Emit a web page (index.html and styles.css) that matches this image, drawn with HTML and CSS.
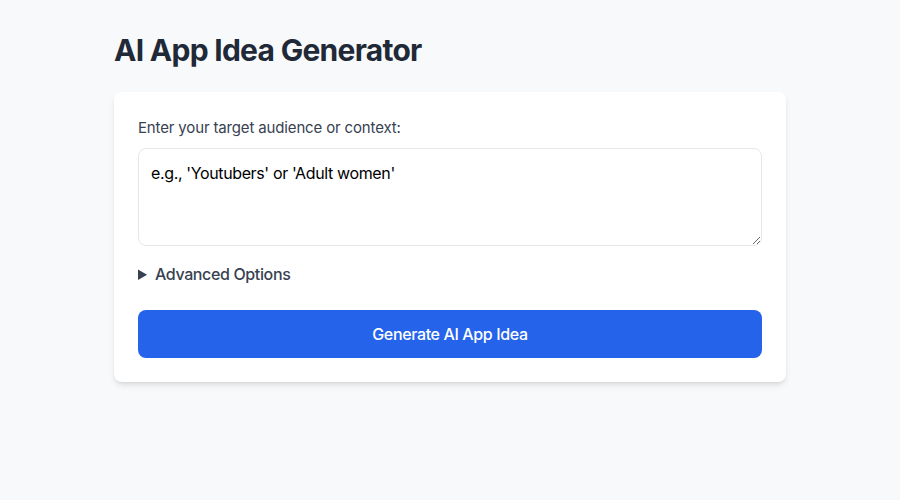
FILE: index.html
```html
<!DOCTYPE html>
<html lang="en">
<head>
<meta charset="utf-8">
<title>AI App Idea Generator</title>
<link rel="stylesheet" href="styles.css">
</head>
<body>
<main class="container">
  <h1 class="title">AI App Idea Generator</h1>
  <section class="card">
    <label class="label" for="ctx">Enter your target audience or context:</label>
    <textarea id="ctx" class="input" placeholder="e.g., 'Youtubers' or 'Adult women'"></textarea>
    <details class="advanced">
      <summary class="summary">Advanced Options</summary>
    </details>
    <button class="btn" type="button">Generate AI App Idea</button>
  </section>
</main>
</body>
</html>
```
FILE: styles.css
```css
* { box-sizing: border-box; }
html, body { margin: 0; padding: 0; }
body {
  background: #f8f9fb;
  font-family: Inter, "Noto Sans", "Liberation Sans", sans-serif;
  color: #1f2937;
  min-height: 500px;
  letter-spacing: -0.023em;
}
.container {
  max-width: 672px;
  margin: 0 auto;
  padding-top: 32px;
}
.title {
  margin: 0 0 24px;
  font-size: 30px;
  line-height: 36px;
  font-weight: 700;
  color: #1f2937;
  letter-spacing: -0.024em;
}
.card {
  background: #fff;
  border-radius: 8px;
  box-shadow: 0 4px 6px -1px rgba(0,0,0,0.1), 0 2px 4px -2px rgba(0,0,0,0.1);
  padding: 24px;
  display: flex;
  flex-direction: column;
}
.label {
  display: block;
  font-size: 15px;
  line-height: 24px;
  color: #374151;
  margin-bottom: 8px;
  letter-spacing: -0.01em;
}
.input {
  display: block;
  width: 100%;
  height: 98px;
  border: 1px solid #e5e7eb;
  border-radius: 8px;
  padding: 12px;
  font-family: inherit;
  font-size: 16px;
  line-height: 24px;
  letter-spacing: -0.023em;
  color: #000;
  resize: vertical;
}
.input::placeholder { color: #000; opacity: 1; }
.advanced {
  margin-top: 16px;
}
.summary {
  font-size: 16px;
  line-height: 24px;
  font-weight: 500;
  color: #374151;
  cursor: pointer;
}
.btn {
  margin-top: 24px;
  width: 100%;
  height: 48px;
  border: none;
  border-radius: 8px;
  background: #2563eb;
  color: #fff;
  font-family: inherit;
  font-size: 16px;
  font-weight: 500;
  letter-spacing: -0.023em;
  cursor: pointer;
}
```
